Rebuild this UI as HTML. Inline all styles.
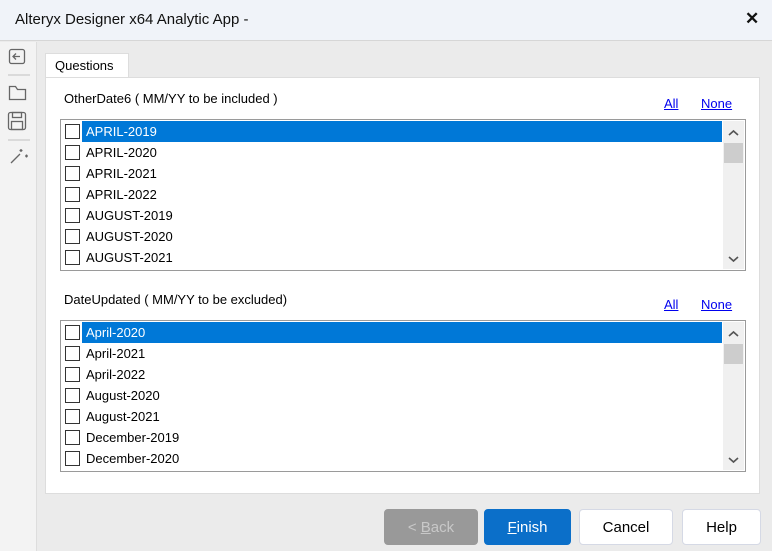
<!DOCTYPE html><html><head><style>
*{box-sizing:border-box;margin:0;padding:0}
body{width:772px;height:551px;background:#ebebeb;font-family:"Liberation Sans",sans-serif;font-size:13px;color:#000;position:relative;overflow:hidden}
.a{position:absolute}
.title{left:0;top:0;width:772px;height:41px;background:#f0f3f9;border-bottom:1px solid #d6d6d6}
.title span{position:absolute;left:15px;top:11px;font-size:15px;color:#111}
.side{left:0;top:42px;width:37px;height:509px;background:#f3f3f3;border-right:1px solid #ddd}
.panel{left:45px;top:77px;width:715px;height:417px;background:#fff;border:1px solid #ddd}
.tab{left:45px;top:53px;width:84px;height:25px;background:#fff;border:1px solid #ddd;border-bottom:none;padding:4px 0 0 9px;font-size:13px}
.list{left:60px;width:686px;height:152px;border:1px solid #9a9a9a;background:#fff}
.row{position:absolute;left:0;height:21px;width:662px}
.cb{position:absolute;left:4px;top:3px;width:15px;height:15px;border:1px solid #333;background:#fff}
.row span{position:absolute;left:21px;top:0;height:21px;width:640px;padding:3px 0 0 4px}
.sel span{background:#0078d7;color:#fff}
.sb{position:absolute;right:1px;top:1px;width:21px;height:148px;background:#f0f0f0}
.thumb{position:absolute;left:1px;top:22px;width:19px;height:20px;background:#cdcdcd}
.lnk{color:#0000ee;text-decoration:underline;font-size:13px}
.btn{top:509px;height:36px;border-radius:4px;font-size:15px;text-align:center;line-height:35px;border:1px solid #d5d9e5;background:#fff}
</style></head><body>
<div class="a title"><span>Alteryx Designer x64 Analytic App -</span><span style="left:745px;top:9px;font-weight:bold;font-size:17px">✕</span></div>
<div class="a side"></div>
<svg width="37" height="180" class="a" style="left:0;top:0" fill="none" stroke="#666" stroke-width="1.3">
<rect x="9.5" y="49.5" width="15" height="14" rx="2"/><path d="M20 56.5h-7m3-3l-3 3 3 3"/>
<line x1="8" y1="75" x2="30" y2="75" stroke="#ccc"/>
<path d="M9.5 99.5h16v-10h-8l-2-3h-6z"/>
<rect x="8.5" y="112.5" width="17" height="17" rx="2"/><rect x="12.5" y="112.5" width="9" height="5"/><rect x="11.5" y="121.5" width="11" height="8"/>
<line x1="8" y1="140" x2="30" y2="140" stroke="#ccc"/>
<path d="M11 163l9-9"/><path d="M21 149v3m-1.5-1.5h3M25 156h3m-1.5-1.5v3"/>
</svg>
<div class="a tab">Questions</div>
<div class="a panel"></div>
<div class="a" style="left:64px;top:91px">OtherDate6 ( MM/YY to be included )</div>
<div class="a lnk" style="left:664px;top:96px">All</div><div class="a lnk" style="left:701px;top:96px">None</div>
<div class="a list" style="top:119px">
<div class="row sel" style="top:1px"><div class="cb"></div><span>APRIL-2019</span></div>
<div class="row" style="top:22px"><div class="cb"></div><span>APRIL-2020</span></div>
<div class="row" style="top:43px"><div class="cb"></div><span>APRIL-2021</span></div>
<div class="row" style="top:64px"><div class="cb"></div><span>APRIL-2022</span></div>
<div class="row" style="top:85px"><div class="cb"></div><span>AUGUST-2019</span></div>
<div class="row" style="top:106px"><div class="cb"></div><span>AUGUST-2020</span></div>
<div class="row" style="top:127px"><div class="cb"></div><span>AUGUST-2021</span></div>
<div class="sb"><div class="thumb"></div><svg width="21" height="148" style="position:absolute;left:0;top:0" fill="none" stroke="#555" stroke-width="1.6"><path d="M6 14l4.5-4 4.5 4M6 136l4.5 4 4.5-4"/></svg></div>
</div>
<div class="a" style="left:64px;top:292px">DateUpdated ( MM/YY to be excluded)</div>
<div class="a lnk" style="left:664px;top:297px">All</div><div class="a lnk" style="left:701px;top:297px">None</div>
<div class="a list" style="top:320px">
<div class="row sel" style="top:1px"><div class="cb"></div><span>April-2020</span></div>
<div class="row" style="top:22px"><div class="cb"></div><span>April-2021</span></div>
<div class="row" style="top:43px"><div class="cb"></div><span>April-2022</span></div>
<div class="row" style="top:64px"><div class="cb"></div><span>August-2020</span></div>
<div class="row" style="top:85px"><div class="cb"></div><span>August-2021</span></div>
<div class="row" style="top:106px"><div class="cb"></div><span>December-2019</span></div>
<div class="row" style="top:127px"><div class="cb"></div><span>December-2020</span></div>
<div class="sb"><div class="thumb"></div><svg width="21" height="148" style="position:absolute;left:0;top:0" fill="none" stroke="#555" stroke-width="1.6"><path d="M6 14l4.5-4 4.5 4M6 136l4.5 4 4.5-4"/></svg></div>
</div>
<div class="a btn" style="left:384px;width:94px;background:#999;border-color:#999;color:#c8c8c8">&lt; <u>B</u>ack</div>
<div class="a btn" style="left:484px;width:87px;background:#0b6fc9;border-color:#0b6fc9;color:#fff"><u>F</u>inish</div>
<div class="a btn" style="left:579px;width:94px">Cancel</div>
<div class="a btn" style="left:682px;width:79px">Help</div>
</body></html>
